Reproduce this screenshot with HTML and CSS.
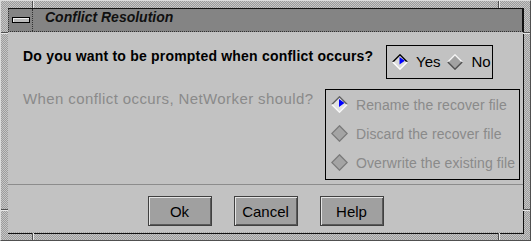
FILE: index.html
```html
<!DOCTYPE html>
<html>
<head>
<meta charset="utf-8">
<link rel="stylesheet" href="styles.css">
</head>
<body>
<div class="window">
  <span class="notch v" style="left:31px;top:0"></span>
  <span class="notch v" style="left:497px;top:0"></span>
  <span class="notch v" style="left:31px;bottom:0"></span>
  <span class="notch v" style="left:497px;bottom:0"></span>
  <span class="notch h" style="left:0;top:31px"></span>
  <span class="notch h" style="right:0;top:31px"></span>
  <span class="notch h" style="left:0;top:208px"></span>
  <span class="notch h" style="right:0;top:208px"></span>
  <div class="inner">
    <div class="titlebar">
      <div class="menu-btn"><div class="menu-bar"></div></div>
      <div class="title">Conflict Resolution</div>
    </div>
    <div class="client">
      <div class="content">
        <div class="row">
          <div class="label">Do you want to be prompted when conflict occurs?</div>
          <div class="yesno">
            <svg class="dia" width="16" height="16" viewBox="0 0 16 16">
              <polygon points="8,0.8 15.2,8 8,15.2 0.8,8" fill="#dcdcdc"/>
              <polyline points="0.8,8 8,0.8 15.2,8" fill="none" stroke="#000" stroke-width="1.4"/>
              <polyline points="15.2,8 8,15.2 0.8,8" fill="none" stroke="#fff" stroke-width="1.4"/>
              <polygon points="7.5,3 12.8,6.8 7.5,10.6" fill="#0000ff"/>
            </svg>
            <span class="opt-text first">Yes</span>
            <svg class="dia" width="16" height="16" viewBox="0 0 16 16">
              <polygon points="8,0.8 15.2,8 8,15.2 0.8,8" fill="#a2a2a2"/>
              <polyline points="0.8,8 8,0.8 15.2,8" fill="none" stroke="#f4f4f4" stroke-width="1.4"/>
              <polyline points="15.2,8 8,15.2 0.8,8" fill="none" stroke="#505050" stroke-width="1.4"/>
            </svg>
            <span class="opt-text">No</span>
          </div>
        </div>
        <div class="row">
          <div class="label disabled">When conflict occurs, NetWorker should?</div>
          <div class="options">
            <div class="option">
              <svg class="dia" width="17" height="17" viewBox="0 0 17 17">
                <polygon points="8.5,0.8 16.2,8.5 8.5,16.2 0.8,8.5" fill="#e2e2e2"/>
                <polyline points="0.8,8.5 8.5,0.8 16.2,8.5" fill="none" stroke="#606060" stroke-width="1.4"/>
                <polyline points="16.2,8.5 8.5,16.2 0.8,8.5" fill="none" stroke="#f8f8f8" stroke-width="1.4"/>
                <polygon points="8,3 13.5,7 8,11" fill="#0000ff"/>
              </svg>
              <span class="disabled">Rename the recover file</span>
            </div>
            <div class="option">
              <svg class="dia" width="17" height="17" viewBox="0 0 17 17">
                <polygon points="8.5,0.8 16.2,8.5 8.5,16.2 0.8,8.5" fill="#a4a4a4" stroke="#7a7a7a" stroke-width="1.3"/>
              </svg>
              <span class="disabled">Discard the recover file</span>
            </div>
            <div class="option">
              <svg class="dia" width="17" height="17" viewBox="0 0 17 17">
                <polygon points="8.5,0.8 16.2,8.5 8.5,16.2 0.8,8.5" fill="#a4a4a4" stroke="#7a7a7a" stroke-width="1.3"/>
              </svg>
              <span class="disabled">Overwrite the existing file</span>
            </div>
          </div>
        </div>
      </div>
      <div class="separator"></div>
      <div class="footer">
        <button class="btn">Ok</button>
        <button class="btn">Cancel</button>
        <button class="btn">Help</button>
      </div>
    </div>
  </div>
</div>
</body>
</html>
```

FILE: styles.css
```css
html, body {
  margin: 0;
  padding: 0;
  background: #c2c2c2;
}

body {
  font-family: "Liberation Sans", Arial, sans-serif;
}

.window {
  position: relative;
  box-sizing: border-box;
  width: 531px;
  height: 241px;
  padding: 7px 6px 7px 7px;
  border: 1px solid;
  border-color: #dcdcdc #505050 #505050 #dcdcdc;
  background: repeating-conic-gradient(#9c9c9c 0 25%, #c6c6c6 0 50%) 0 0 / 2px 2px;
}

.notch {
  position: absolute;
  display: block;
}

.notch.v {
  width: 1px;
  height: 7px;
  background: #505050;
  box-shadow: 1px 0 #e8e8e8;
}

.notch.h {
  width: 7px;
  height: 1px;
  background: #505050;
  box-shadow: 0 1px #e8e8e8;
}

.inner {
  display: flex;
  flex-direction: column;
  height: 225px;
  border-right: 1px solid #101010;
  border-bottom: 1px solid #101010;
}

.titlebar {
  box-sizing: border-box;
  height: 24px;
  display: flex;
  align-items: stretch;
  background: #848484;
  border: 1px dotted #303030;
  border-right: 1px solid #101010;
  border-top: 1px solid #101010;
}

.menu-btn {
  width: 23px;
  display: flex;
  align-items: center;
  justify-content: center;
  border-right: 1px dotted #303030;
}

.menu-bar {
  box-sizing: border-box;
  width: 18px;
  height: 6px;
  border: 1px solid #000;
  background: #bcbcbc;
  box-shadow: inset 1px 1px #f0f0f0;
}

.title {
  padding-left: 12px;
  font-size: 14px;
  font-weight: bold;
  font-style: italic;
  line-height: 16px;
  color: #101010;
}

.client {
  height: 200px;
  display: flex;
  flex-direction: column;
  background: #c2c2c2;
}

.content {
  box-sizing: border-box;
  height: 152px;
  padding: 13px 3px 0 15px;
  display: flex;
  flex-direction: column;
  gap: 10px;
}

.row {
  display: flex;
  align-items: flex-start;
}

.label {
  padding-top: 3px;
  font-size: 14px;
  font-weight: bold;
  letter-spacing: 0.2px;
  line-height: 16px;
  color: #000;
  white-space: nowrap;
}

.label.disabled {
  padding-top: 1px;
  font-size: 15px;
  font-weight: normal;
  letter-spacing: 0.4px;
  line-height: 18px;
}

.disabled {
  color: #8a8a8a;
}

.yesno {
  box-sizing: border-box;
  margin-left: auto;
  margin-right: 27px;
  width: 107px;
  height: 34px;
  padding: 0 5px 0 5px;
  display: flex;
  align-items: center;
  border: 1px solid #000;
  font-size: 15px;
  line-height: 18px;
}

.opt-text {
  margin-left: 8px;
}

.opt-text.first {
  margin-right: 7px;
}

.dia {
  display: block;
  flex: none;
}

.options {
  box-sizing: border-box;
  flex: none;
  margin-left: auto;
  width: 195px;
  padding: 0 0 2px 5px;
  border: 1px solid #000;
  display: flex;
  flex-direction: column;
}

.option {
  height: 29px;
  display: flex;
  align-items: center;
  gap: 8px;
  font-size: 14px;
  letter-spacing: 0.1px;
  line-height: 16px;
  white-space: nowrap;
}

.separator {
  height: 1px;
  background: #8c8c8c;
}

.footer {
  flex: 1;
  display: flex;
  justify-content: center;
  align-items: flex-start;
  gap: 22px;
  padding-top: 11px;
}

.btn {
  box-sizing: border-box;
  width: 64px;
  height: 30px;
  padding: 0;
  border: 1px solid #404040;
  background: #a0a0a0;
  box-shadow: inset 1px 1px #e4e4e4, inset -1px -1px #5a5a5a;
  font-family: "Liberation Sans", Arial, sans-serif;
  font-size: 15px;
  color: #000;
}
```
